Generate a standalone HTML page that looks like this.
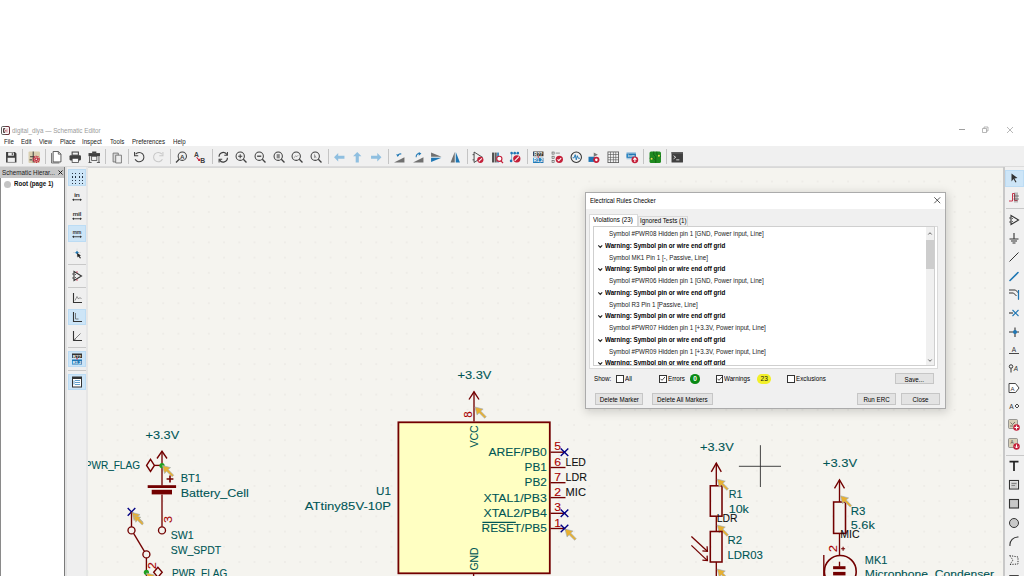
<!DOCTYPE html>
<html><head><meta charset="utf-8">
<style>
*{margin:0;padding:0;box-sizing:border-box}
html,body{width:1024px;height:576px;overflow:hidden;background:#fff;font-family:"Liberation Sans",sans-serif}
.a{position:absolute}
.t{position:absolute;white-space:nowrap;line-height:1}
.u{font-size:7px;line-height:normal;transform-origin:0 0}
.m{transform:scaleX(0.875)}
svg{position:absolute;overflow:visible}
#tb{left:0;top:146px;width:1024px;height:21px;background:#f0f0f0;border-bottom:1px solid #dcdcdc}
#lp{left:0;top:167px;width:65px;height:409px;background:#fff;border-left:1.2px solid #8a8a8a;border-right:1.2px solid #7a7a7a}
#lph{left:0;top:167px;width:64px;height:11px;background:#c8c8c8}
#ltb{left:65px;top:167px;width:23px;height:409px;background:#efefef;border-left:2px solid #e2e2e2;border-right:2px solid #e6e6e6}
#cv{left:88px;top:167px;width:915px;height:409px;background:#f5f4ef;border-top:1px solid #d8d8d8}
#rtb{left:1003px;top:167px;width:21px;height:409px;background:#f0f0f0;border-left:2px solid #c8c8c8}
.sep{position:absolute;top:149px;width:1px;height:15px;background:#c4c4c4}
.hl{position:absolute;background:#cde5f7;border:1px solid #bcdcf4}
.lsep{position:absolute;left:68px;width:18px;height:1px;background:#c8c8c8}
.rsep{position:absolute;left:1006px;width:18px;height:1px;background:#c8c8c8}
</style></head><body>
<!-- title bar -->
<svg style="left:1.1px;top:125.6px" width="9" height="9" viewBox="0 0 9 9"><rect x="0.5" y="0.5" width="8" height="8" rx="1.3" fill="#fff" stroke="#606060" stroke-width="1"/><path d="M4.5 0.5H7.2A1.3 1.3 0 0 1 8.5 1.8V7.2A1.3 1.3 0 0 1 7.2 8.5H4.5" fill="none" stroke="#70303a" stroke-width="1"/><path d="M2.2 2.2h2v1h-1v2.6h1v1h-2z" fill="#2a1010"/><rect x="4.6" y="2.4" width="2.6" height="4.4" fill="#e8c8cc"/><rect x="4.2" y="4.2" width="1.2" height="1.2" fill="#b04050"/></svg>
<div class="t u" style="left:12.2px;top:126.96px;color:#9a9a9a;transform:scaleX(0.897)">digital_diya — Schematic Editor</div>
<div class="a" style="left:959px;top:129.3px;width:6px;height:0.7px;background:#a0a0a0"></div>
<svg style="left:981px;top:126px" width="8" height="8" viewBox="0 0 8 8"><path d="M1.5 2.5h4v4h-4zM3 2.5V1h4v4H5.5" fill="none" stroke="#9a9a9a" stroke-width="0.7"/></svg>
<svg style="left:1006px;top:126px" width="8" height="8" viewBox="0 0 8 8"><path d="M1 1L7 7M7 1L1 7" stroke="#9a9a9a" stroke-width="0.7"/></svg>
<!-- menu -->
<div class="t u m" style="left:3.6px;top:137.66px;color:#222">File</div>
<div class="t u m" style="left:20.5px;top:137.66px;color:#222">Edit</div>
<div class="t u m" style="left:38.7px;top:137.66px;color:#222">View</div>
<div class="t u m" style="left:59.5px;top:137.66px;color:#222">Place</div>
<div class="t u m" style="left:82px;top:137.66px;color:#222">Inspect</div>
<div class="t u m" style="left:110px;top:137.66px;color:#222">Tools</div>
<div class="t u m" style="left:132px;top:137.66px;color:#222">Preferences</div>
<div class="t u m" style="left:172.5px;top:137.66px;color:#222">Help</div>
<!-- toolbar -->
<div class="a" id="tb"></div>
<svg style="left:4.55px;top:150.8px" width="12.5" height="12.5" viewBox="0 0 24 24"><path d="M2 2h17l3 3v17H2z" fill="#404040"/><rect x="6" y="3" width="11" height="6" fill="#f0f0f0"/><rect x="13" y="4" width="2" height="4" fill="#404040"/><rect x="5" y="13" width="14" height="8" fill="#f0f0f0"/></svg>
<svg style="left:27.75px;top:150.8px" width="12.5" height="12.5" viewBox="0 0 24 24"><rect x="1" y="1" width="22" height="22" rx="2" fill="#d9cfb0"/><path d="M10 1v10M4 11h8M10 11v11M3 17h5" stroke="#333" stroke-width="1.8" fill="none"/><circle cx="16" cy="16" r="5.5" fill="none" stroke="#c4203a" stroke-width="3" stroke-dasharray="2.2 1.2"/><circle cx="16" cy="16" r="3.5" fill="#c4203a"/><circle cx="16" cy="16" r="1.6" fill="#f0f0f0"/></svg>
<svg style="left:49.75px;top:150.8px" width="12.5" height="12.5" viewBox="0 0 24 24"><path d="M6 1h10l5 5v15H6z" fill="#fff" stroke="#404040" stroke-width="1.6"/><path d="M16 1v5h5" fill="none" stroke="#404040" stroke-width="1.4"/><path d="M3 4v19h15" fill="none" stroke="#404040" stroke-width="1.4"/></svg>
<svg style="left:68.95px;top:150.8px" width="12.5" height="12.5" viewBox="0 0 24 24"><rect x="6" y="2" width="12" height="6" fill="none" stroke="#404040" stroke-width="2"/><rect x="1" y="8" width="22" height="10" rx="2" fill="#404040"/><rect x="6" y="14" width="12" height="8" fill="#f8f8f8" stroke="#404040" stroke-width="1.5"/></svg>
<svg style="left:87.55px;top:150.8px" width="12.5" height="12.5" viewBox="0 0 24 24"><rect x="1" y="4" width="22" height="6" fill="#404040"/><path d="M3 10v12M21 10v12M1 22h6M17 22h6" stroke="#404040" stroke-width="1.6"/><rect x="7" y="10" width="10" height="8" fill="none" stroke="#404040" stroke-width="1.5"/><rect x="8" y="1" width="8" height="3" fill="#404040"/></svg>
<svg style="left:111.15px;top:150.8px" width="12.5" height="12.5" viewBox="0 0 24 24"><path d="M4 4h10v17H4z" fill="#d8d8d8" stroke="#6a6a6a" stroke-width="1.6"/><path d="M9 8h11v15H9z" fill="#eeeeee" stroke="#6a6a6a" stroke-width="1.6"/></svg>
<svg style="left:133.35px;top:150.8px" width="12.5" height="12.5" viewBox="0 0 24 24"><path d="M5 6a9 9 0 1 1 -1 10" fill="none" stroke="#404040" stroke-width="2"/><path d="M3 2v7h7" fill="none" stroke="#404040" stroke-width="2"/></svg>
<svg style="left:152.05px;top:150.8px" width="12.5" height="12.5" viewBox="0 0 24 24"><path d="M19 6a9 9 0 1 0 1 10" fill="none" stroke="#c8c8c8" stroke-width="2"/><path d="M21 2v7h-7" fill="none" stroke="#c8c8c8" stroke-width="2"/></svg>
<svg style="left:175.25px;top:150.8px" width="12.5" height="12.5" viewBox="0 0 24 24"><circle cx="14" cy="10" r="8" fill="none" stroke="#404040" stroke-width="2"/><path d="M8 16L2 22" stroke="#404040" stroke-width="2.5"/><text x="14" y="14.5" font-size="12" text-anchor="middle" font-family="Liberation Sans" font-weight="bold" fill="#404040">A</text></svg>
<svg style="left:194.25px;top:150.8px" width="12.5" height="12.5" viewBox="0 0 24 24"><text x="0" y="11" font-size="13" font-family="Liberation Sans" font-weight="bold" fill="#404040">A</text><text x="12" y="23" font-size="13" font-family="Liberation Sans" font-weight="bold" fill="#404040">B</text><path d="M5 12l5 6M8 18h3v-3" stroke="#c4203a" stroke-width="2" fill="none"/></svg>
<svg style="left:216.55px;top:150.8px" width="12.5" height="12.5" viewBox="0 0 24 24"><path d="M4 11a8 8 0 0 1 15-4M20 13a8 8 0 0 1-15 4" fill="none" stroke="#404040" stroke-width="2.2"/><path d="M20 2v6h-6M4 22v-6h6" fill="none" stroke="#404040" stroke-width="2"/></svg>
<svg style="left:235.15px;top:150.8px" width="12.5" height="12.5" viewBox="0 0 24 24"><circle cx="10" cy="10" r="8" fill="none" stroke="#404040" stroke-width="2"/><path d="M16 16L22 22" stroke="#404040" stroke-width="2.5"/><path d="M6 10h8M10 6v8" stroke="#404040" stroke-width="2"/></svg>
<svg style="left:253.65px;top:150.8px" width="12.5" height="12.5" viewBox="0 0 24 24"><circle cx="10" cy="10" r="8" fill="none" stroke="#404040" stroke-width="2"/><path d="M16 16L22 22" stroke="#404040" stroke-width="2.5"/><path d="M6 10h8" stroke="#404040" stroke-width="2.5"/></svg>
<svg style="left:272.65px;top:150.8px" width="12.5" height="12.5" viewBox="0 0 24 24"><circle cx="10" cy="10" r="8" fill="none" stroke="#404040" stroke-width="2"/><path d="M16 16L22 22" stroke="#404040" stroke-width="2.5"/><rect x="7" y="6" width="6" height="8" fill="#888"/></svg>
<svg style="left:291.35px;top:150.8px" width="12.5" height="12.5" viewBox="0 0 24 24"><circle cx="10" cy="10" r="8" fill="none" stroke="#404040" stroke-width="2"/><path d="M16 16L22 22" stroke="#404040" stroke-width="2.5"/><path d="M6 13l3-4 2 2 3-3" stroke="#777" stroke-width="1.3" fill="none"/></svg>
<svg style="left:310.05px;top:150.8px" width="12.5" height="12.5" viewBox="0 0 24 24"><circle cx="10" cy="10" r="8" fill="none" stroke="#404040" stroke-width="2"/><path d="M16 16L22 22" stroke="#404040" stroke-width="2.5"/><path d="M8 5v9l2-2 3 2z" fill="#888"/></svg>
<svg style="left:332.95px;top:150.8px" width="12.5" height="12.5" viewBox="0 0 24 24"><path d="M2 12l8-8v5h12v6H10v5z" fill="#8fbfe0"/></svg>
<svg style="left:351.35px;top:150.8px" width="12.5" height="12.5" viewBox="0 0 24 24"><path d="M12 2l8 8h-5v12H9V10H4z" fill="#8fbfe0"/></svg>
<svg style="left:370.05px;top:150.8px" width="12.5" height="12.5" viewBox="0 0 24 24"><path d="M22 12l-8-8v5H2v6h12v5z" fill="#8fbfe0"/></svg>
<svg style="left:392.65px;top:150.8px" width="12.5" height="12.5" viewBox="0 0 24 24"><path d="M2 22L22 12v10z" fill="#707070"/><path d="M9 10a5 5 0 0 1 7-4" fill="none" stroke="#1f77b4" stroke-width="2"/><path d="M6 6l3 5 3-4z" fill="#1f77b4"/></svg>
<svg style="left:412.35px;top:150.8px" width="12.5" height="12.5" viewBox="0 0 24 24"><path d="M2 22L22 12v10z" fill="#707070"/><path d="M8 12a6 6 0 0 1 6-7" fill="none" stroke="#1f77b4" stroke-width="2"/><path d="M13 2l5 3-5 4z" fill="#1f77b4"/></svg>
<svg style="left:430.15px;top:150.8px" width="12.5" height="12.5" viewBox="0 0 24 24"><path d="M2 3L22 11H2z" fill="#707070"/><path d="M2 13H22L2 21z" fill="#1f77b4"/></svg>
<svg style="left:449.15px;top:150.8px" width="12.5" height="12.5" viewBox="0 0 24 24"><path d="M11 2L3 22h8z" fill="#707070"/><path d="M13 2v20h8z" fill="#1f77b4"/></svg>
<svg style="left:471.95px;top:150.8px" width="12.5" height="12.5" viewBox="0 0 24 24"><path d="M4 2L20 12L4 22z" fill="none" stroke="#333" stroke-width="1.6"/><path d="M1 7h3M1 17h3" stroke="#333" stroke-width="1.5"/><circle cx="16" cy="17" r="6" fill="#c4203a"/><path d="M13 20l6-6" stroke="#fff" stroke-width="2"/></svg>
<svg style="left:490.85px;top:150.8px" width="12.5" height="12.5" viewBox="0 0 24 24"><rect x="2" y="3" width="4" height="19" fill="#505050"/><rect x="7" y="3" width="4" height="19" fill="#606060"/><rect x="12" y="3" width="3" height="19" fill="#1f77b4"/><circle cx="16" cy="15" r="5" fill="#fff" stroke="#c4203a" stroke-width="2.2"/><path d="M19 19l4 4" stroke="#c4203a" stroke-width="2.4"/></svg>
<svg style="left:509.35px;top:150.8px" width="12.5" height="12.5" viewBox="0 0 24 24"><path d="M5 5h14M5 5v14" stroke="#6aa0d0" stroke-width="1.5"/><circle cx="5" cy="4" r="2.5" fill="#1f77b4"/><circle cx="11" cy="4" r="2.5" fill="#1f77b4"/><circle cx="17" cy="4" r="2.5" fill="#1f77b4"/><circle cx="4" cy="19" r="2.5" fill="#1f77b4"/><circle cx="15" cy="15" r="7" fill="#c4203a"/><path d="M11 19l8-8" stroke="#fff" stroke-width="2"/></svg>
<svg style="left:532.45px;top:150.8px" width="12.5" height="12.5" viewBox="0 0 24 24"><rect x="2" y="1" width="20" height="9" fill="#333"/><text x="12" y="9" font-size="8.5" text-anchor="middle" font-family="Liberation Sans" font-weight="bold" fill="#fff">R??</text><rect x="2" y="13" width="20" height="10" fill="#1f77b4"/><text x="12" y="21.5" font-size="8.5" text-anchor="middle" font-family="Liberation Sans" font-weight="bold" fill="#fff">R1,2</text><circle cx="12" cy="11.5" r="1.5" fill="#c4203a"/></svg>
<svg style="left:551.45px;top:150.8px" width="12.5" height="12.5" viewBox="0 0 24 24"><rect x="2" y="2" width="4" height="4" fill="none" stroke="#555" stroke-width="1.2"/><rect x="2" y="10" width="4" height="4" fill="none" stroke="#555" stroke-width="1.2"/><rect x="2" y="18" width="4" height="4" fill="none" stroke="#555" stroke-width="1.2"/><path d="M9 4h8" stroke="#555" stroke-width="1.2"/><circle cx="16" cy="16" r="7" fill="#c4203a"/><path d="M12.5 16l2.5 2.5 4.5-5" stroke="#fff" stroke-width="2" fill="none"/></svg>
<svg style="left:569.65px;top:150.8px" width="12.5" height="12.5" viewBox="0 0 24 24"><circle cx="12" cy="12" r="10" fill="none" stroke="#333" stroke-width="2"/><path d="M5 13h3l2-6 2 10 2-8 2 5h3" stroke="#1f77b4" stroke-width="1.8" fill="none"/></svg>
<svg style="left:588.25px;top:150.8px" width="12.5" height="12.5" viewBox="0 0 24 24"><rect x="1" y="11" width="12" height="10" fill="#1f77b4"/><path d="M11 3l8 4-8 4z" fill="#777"/><circle cx="16" cy="17" r="6" fill="#c4203a"/><circle cx="16" cy="17" r="2.5" fill="#fff"/></svg>
<svg style="left:606.75px;top:150.8px" width="12.5" height="12.5" viewBox="0 0 24 24"><rect x="1" y="1" width="22" height="22" fill="#5a5a5a"/><rect x="2.6" y="2.6" width="3.8" height="3.8" fill="#f4f4f4"/><rect x="2.6" y="7.6" width="3.8" height="3.8" fill="#f4f4f4"/><rect x="2.6" y="12.6" width="3.8" height="3.8" fill="#f4f4f4"/><rect x="2.6" y="17.6" width="3.8" height="3.8" fill="#f4f4f4"/><rect x="7.6" y="2.6" width="3.8" height="3.8" fill="#f4f4f4"/><rect x="7.6" y="7.6" width="3.8" height="3.8" fill="#f4f4f4"/><rect x="7.6" y="12.6" width="3.8" height="3.8" fill="#f4f4f4"/><rect x="7.6" y="17.6" width="3.8" height="3.8" fill="#f4f4f4"/><rect x="12.6" y="2.6" width="3.8" height="3.8" fill="#f4f4f4"/><rect x="12.6" y="7.6" width="3.8" height="3.8" fill="#f4f4f4"/><rect x="12.6" y="12.6" width="3.8" height="3.8" fill="#f4f4f4"/><rect x="12.6" y="17.6" width="3.8" height="3.8" fill="#f4f4f4"/><rect x="17.6" y="2.6" width="3.8" height="3.8" fill="#f4f4f4"/><rect x="17.6" y="7.6" width="3.8" height="3.8" fill="#f4f4f4"/><rect x="17.6" y="12.6" width="3.8" height="3.8" fill="#f4f4f4"/><rect x="17.6" y="17.6" width="3.8" height="3.8" fill="#f4f4f4"/></svg>
<svg style="left:625.75px;top:150.8px" width="12.5" height="12.5" viewBox="0 0 24 24"><rect x="1" y="2" width="18" height="14" fill="#aac8e0"/><rect x="1" y="5" width="18" height="8" fill="#1f77b4"/><text x="10" y="11.5" font-size="7" text-anchor="middle" font-family="Liberation Sans" fill="#fff">bom</text><circle cx="17" cy="17" r="6.5" fill="#c4203a"/><path d="M17 21v-7M14 16.5l3-3 3 3" stroke="#fff" stroke-width="2" fill="none"/></svg>
<svg style="left:648.65px;top:150.8px" width="12.5" height="12.5" viewBox="0 0 24 24"><rect x="1" y="1" width="22" height="22" rx="3" fill="#1f8a1f"/><path d="M9 1v6l4 4v12M15 1v5l4 4h4M1 14h7l3 3" stroke="#0d4d0d" stroke-width="1.2" fill="none"/><circle cx="5" cy="15" r="2" fill="#e8e050"/><circle cx="19" cy="9" r="2" fill="#e8e050"/></svg>
<svg style="left:671.45px;top:150.8px" width="12.5" height="12.5" viewBox="0 0 24 24"><rect x="1" y="2" width="22" height="20" rx="1" fill="#404040"/><rect x="1" y="2" width="22" height="3" fill="#606060"/><path d="M5 9l4 3-4 3" stroke="#fff" stroke-width="1.5" fill="none"/><path d="M10 17h6" stroke="#fff" stroke-width="1.5"/></svg>
<div class="sep" style="left:22.1px"></div>
<div class="sep" style="left:44.9px"></div>
<div class="sep" style="left:105.1px"></div>
<div class="sep" style="left:128.3px"></div>
<div class="sep" style="left:169.9px"></div>
<div class="sep" style="left:211.5px"></div>
<div class="sep" style="left:328.2px"></div>
<div class="sep" style="left:388.3px"></div>
<div class="sep" style="left:467.0px"></div>
<div class="sep" style="left:526.7px"></div>
<div class="sep" style="left:643.3px"></div>
<div class="sep" style="left:666.1px"></div>
<!-- panels -->
<div class="a" id="lp"></div>
<div class="a" id="lph"></div>
<div class="t u" style="left:1.7px;top:169.4px;color:#1a1a1a;transform:scaleX(0.898)">Schematic Hierar...</div>
<svg style="left:57.5px;top:170px" width="5" height="5" viewBox="0 0 5 5"><path d="M0.5 0.5L4.5 4.5M4.5 0.5L0.5 4.5" stroke="#111" stroke-width="0.9"/></svg>
<div class="a" style="left:4px;top:181px;width:7px;height:7px;border-radius:50%;background:#c4c4c4"></div>
<div class="t u" style="left:14.3px;top:180.2px;font-weight:bold;color:#111;transform:scaleX(0.88)">Root (page 1)</div>
<div class="a" id="ltb"></div>
<div class="hl" style="left:68px;top:169.3px;width:18px;height:17.1px"></div>
<div class="hl" style="left:68px;top:225.3px;width:18px;height:16.7px"></div>
<div class="hl" style="left:68px;top:308.6px;width:18px;height:16.7px"></div>
<div class="hl" style="left:68px;top:351.2px;width:18px;height:16.0px"></div>
<div class="hl" style="left:68px;top:373.5px;width:18px;height:16.6px"></div>
<div class="a" style="left:71.60px;top:172.70px;width:1.4px;height:1.4px;background:#1a2636;border-radius:0.3px"></div>
<div class="a" style="left:71.60px;top:176.15px;width:1.4px;height:1.4px;background:#1a2636;border-radius:0.3px"></div>
<div class="a" style="left:71.60px;top:179.60px;width:1.4px;height:1.4px;background:#1a2636;border-radius:0.3px"></div>
<div class="a" style="left:71.60px;top:183.05px;width:1.4px;height:1.4px;background:#1a2636;border-radius:0.3px"></div>
<div class="a" style="left:75.05px;top:172.70px;width:1.4px;height:1.4px;background:#1a2636;border-radius:0.3px"></div>
<div class="a" style="left:75.05px;top:176.15px;width:1.4px;height:1.4px;background:#1a2636;border-radius:0.3px"></div>
<div class="a" style="left:75.05px;top:179.60px;width:1.4px;height:1.4px;background:#1a2636;border-radius:0.3px"></div>
<div class="a" style="left:75.05px;top:183.05px;width:1.4px;height:1.4px;background:#1a2636;border-radius:0.3px"></div>
<div class="a" style="left:78.50px;top:172.70px;width:1.4px;height:1.4px;background:#1a2636;border-radius:0.3px"></div>
<div class="a" style="left:78.50px;top:176.15px;width:1.4px;height:1.4px;background:#1a2636;border-radius:0.3px"></div>
<div class="a" style="left:78.50px;top:179.60px;width:1.4px;height:1.4px;background:#1a2636;border-radius:0.3px"></div>
<div class="a" style="left:78.50px;top:183.05px;width:1.4px;height:1.4px;background:#1a2636;border-radius:0.3px"></div>
<div class="a" style="left:81.95px;top:172.70px;width:1.4px;height:1.4px;background:#1a2636;border-radius:0.3px"></div>
<div class="a" style="left:81.95px;top:176.15px;width:1.4px;height:1.4px;background:#1a2636;border-radius:0.3px"></div>
<div class="a" style="left:81.95px;top:179.60px;width:1.4px;height:1.4px;background:#1a2636;border-radius:0.3px"></div>
<div class="a" style="left:81.95px;top:183.05px;width:1.4px;height:1.4px;background:#1a2636;border-radius:0.3px"></div>
<div class="lsep" style="top:264.0px"></div>
<div class="lsep" style="top:287.0px"></div>
<div class="lsep" style="top:347.0px"></div>
<div class="lsep" style="top:370.0px"></div>
<svg style="left:71.0px;top:171.8px" width="12" height="12" viewBox="0 0 24 24"></svg>
<svg style="left:71.0px;top:190.8px" width="12" height="12" viewBox="0 0 24 24"><text x="12" y="11.5" font-size="12" text-anchor="middle" font-family="Liberation Sans" fill="#333" stroke="#333" stroke-width="0.4" textLength="11" lengthAdjust="spacingAndGlyphs">in</text><path d="M4 17.5h16" stroke="#333" stroke-width="1.8"/><path d="M2 17.5l4-2.5v5zM22 17.5l-4-2.5v5z" fill="#333"/></svg>
<svg style="left:71.0px;top:209.5px" width="12" height="12" viewBox="0 0 24 24"><text x="12" y="11.5" font-size="12" text-anchor="middle" font-family="Liberation Sans" fill="#333" stroke="#333" stroke-width="0.4" textLength="17" lengthAdjust="spacingAndGlyphs">mil</text><path d="M4 17.5h16" stroke="#333" stroke-width="1.8"/><path d="M2 17.5l4-2.5v5zM22 17.5l-4-2.5v5z" fill="#333"/></svg>
<svg style="left:71.0px;top:228.2px" width="12" height="12" viewBox="0 0 24 24"><text x="12" y="11.5" font-size="12" text-anchor="middle" font-family="Liberation Sans" fill="#333" stroke="#333" stroke-width="0.4" textLength="17" lengthAdjust="spacingAndGlyphs">mm</text><path d="M4 17.5h16" stroke="#333" stroke-width="1.8"/><path d="M2 17.5l4-2.5v5zM22 17.5l-4-2.5v5z" fill="#333"/></svg>
<svg style="left:71.0px;top:246.7px" width="12" height="12" viewBox="0 0 24 24"><path d="M12 3v16M4 11h16" stroke="#c8c8c8" stroke-width="1"/><path d="M9 11h6M12 8v6" stroke="#1f77b4" stroke-width="2.5"/><path d="M12 12l8 5-3 1 3 4-2 1-3-4-2 2z" fill="#222"/></svg>
<svg style="left:71.0px;top:269.6px" width="12" height="12" viewBox="0 0 24 24"><path d="M6 3L21 12L6 21z" fill="none" stroke="#333" stroke-width="2.2"/><path d="M2 8h4M2 16h4" stroke="#333" stroke-width="1.5"/><circle cx="9" cy="9" r="1" fill="#333"/><circle cx="9" cy="15" r="1" fill="#333"/><circle cx="12" cy="4" r="1.3" fill="#c4203a"/><circle cx="12" cy="20" r="1.3" fill="#c4203a"/></svg>
<svg style="left:71.0px;top:292.2px" width="12" height="12" viewBox="0 0 24 24"><path d="M5 2v19h17" stroke="#333" stroke-width="2.2" fill="none"/><path d="M8 17l4-8 3 5 3-3 3 3" stroke="#555" stroke-width="1.2" fill="none"/></svg>
<svg style="left:71.0px;top:311.0px" width="12" height="12" viewBox="0 0 24 24"><path d="M5 2v19h17" stroke="#333" stroke-width="2.2" fill="none"/><path d="M9 4v12h6" stroke="#555" stroke-width="1.5" fill="none"/></svg>
<svg style="left:71.0px;top:329.6px" width="12" height="12" viewBox="0 0 24 24"><path d="M5 2v19h17" stroke="#333" stroke-width="2.2" fill="none"/><path d="M5 21L19 7" stroke="#555" stroke-width="1.5"/><path d="M9 21a4 4 0 0 0-1-4" stroke="#555" fill="none"/></svg>
<svg style="left:71.0px;top:353.2px" width="12" height="12" viewBox="0 0 24 24"><rect x="2" y="1" width="20" height="9" fill="#333"/><text x="12" y="9" font-size="8.5" text-anchor="middle" font-family="Liberation Sans" font-weight="bold" fill="#fff">R??</text><rect x="2" y="13" width="20" height="10" fill="#1f77b4"/><text x="12" y="21.5" font-size="8.5" text-anchor="middle" font-family="Liberation Sans" font-weight="bold" fill="#fff">R1,2</text><circle cx="12" cy="11.5" r="1.5" fill="#c4203a"/></svg>
<svg style="left:71.0px;top:375.8px" width="12" height="12" viewBox="0 0 24 24"><rect x="3" y="2" width="18" height="20" fill="#fff" stroke="#333" stroke-width="2"/><rect x="3" y="2" width="18" height="4" fill="#333"/><path d="M8 9h10M8 13h10M8 17h10M6 9v8" stroke="#1f77b4" stroke-width="1.4" fill="none"/></svg>
<div class="a" id="cv"></div>
<svg style="left:88px;top:168px;overflow:hidden" width="915" height="408" viewBox="88 168 915 408"><defs><pattern id="gp" x="102.3" y="181.5" width="15.22" height="15.22" patternUnits="userSpaceOnUse"><rect x="-0.5" y="-0.5" width="1" height="1" fill="#d8d7d1"/><rect x="14.72" y="14.72" width="1" height="1" fill="#d8d7d1"/><rect x="14.72" y="-0.5" width="1" height="1" fill="#d8d7d1"/><rect x="-0.5" y="14.72" width="1" height="1" fill="#d8d7d1"/></pattern></defs><rect x="88" y="168" width="915" height="408" fill="url(#gp)"/><g font-family="Liberation Sans" stroke-width="0"><text x="145.5" y="439.0" font-size="11.8" fill="#005656" stroke="#005656" stroke-width="0.1" text-anchor="start" textLength="33.7" lengthAdjust="spacingAndGlyphs">+3.3V</text>
<path d="M157 458.5 L162 451.3 L167 458.5" fill="none" stroke="#720000" stroke-width="1.35"/>
<line x1="162" y1="451.3" x2="162" y2="485.5" stroke="#720000" stroke-width="1.35"/>
<path d="M146.6 465.4 L150.5 459.4 L154.4 465.4 L150.5 471.4 Z" fill="none" stroke="#720000" stroke-width="1.4"/>
<line x1="154.4" y1="465.4" x2="162" y2="465.4" stroke="#720000" stroke-width="1.35"/>
<circle cx="162" cy="465.6" r="2.6" fill="#20a020"/>
<text x="140.0" y="468.7" font-size="11.8" fill="#005656" stroke="#005656" stroke-width="0.1" text-anchor="end" textLength="55.3" lengthAdjust="spacingAndGlyphs">PWR_FLAG</text>
<path transform="translate(162.5,465.5) scale(0.95)" d="M0 0 L8.5 2.2 L6 4.3 L11.8 10.2 L10.2 11.8 L4.3 6 L2.2 8.5 Z" fill="#e8b030" stroke="#a0acb8" stroke-width="0.7" stroke-linejoin="round"/>
<path d="M166.6 479H173.4M170 475.6V482.4" stroke="#720000" stroke-width="1.6"/>
<rect x="147.7" y="485.2" width="28.4" height="2.8" fill="#720000"/>
<rect x="151.7" y="489.8" width="20.3" height="4.6" fill="#720000"/>
<line x1="162" y1="494.4" x2="162" y2="526.8" stroke="#720000" stroke-width="1.35"/>
<circle cx="162" cy="530.4" r="3.5" fill="none" stroke="#720000" stroke-width="1.35"/>
<text transform="translate(172.1,523.0) rotate(-90)" x="0" y="0" font-size="11.8" fill="#a90000" stroke="#a90000" stroke-width="0.1" textLength="7.1" lengthAdjust="spacingAndGlyphs">3</text>
<text x="180.7" y="481.7" font-size="11.8" fill="#005656" stroke="#005656" stroke-width="0.1" text-anchor="start" textLength="20.2" lengthAdjust="spacingAndGlyphs">BT1</text>
<text x="180.7" y="497.0" font-size="11.8" fill="#005656" stroke="#005656" stroke-width="0.1" text-anchor="start" textLength="68.1" lengthAdjust="spacingAndGlyphs">Battery_Cell</text>
<text x="170.7" y="539.1" font-size="11.8" fill="#005656" stroke="#005656" stroke-width="0.1" text-anchor="start" textLength="22.9" lengthAdjust="spacingAndGlyphs">SW1</text>
<text x="170.7" y="554.0" font-size="11.8" fill="#005656" stroke="#005656" stroke-width="0.1" text-anchor="start" textLength="50.5" lengthAdjust="spacingAndGlyphs">SW_SPDT</text>
<text x="172.0" y="576.7" font-size="11.8" fill="#005656" stroke="#005656" stroke-width="0.1" text-anchor="start" textLength="55.3" lengthAdjust="spacingAndGlyphs">PWR_FLAG</text>
<path d="M127.7 508.09999999999997L135.3 515.6999999999999M135.3 508.09999999999997L127.7 515.6999999999999" stroke="#000084" stroke-width="1.4"/>
<line x1="131.5" y1="511.9" x2="131.5" y2="526.9" stroke="#720000" stroke-width="1.35"/>
<circle cx="131.5" cy="530.4" r="3.5" fill="none" stroke="#720000" stroke-width="1.35"/>
<path transform="translate(132,512.5) scale(0.95)" d="M0 0 L8.5 2.2 L6 4.3 L11.8 10.2 L10.2 11.8 L4.3 6 L2.2 8.5 Z" fill="#e8b030" stroke="#a0acb8" stroke-width="0.7" stroke-linejoin="round"/>
<path transform="translate(134,515.5) scale(0.8)" d="M0 0 L8.5 2.2 L6 4.3 L11.8 10.2 L10.2 11.8 L4.3 6 L2.2 8.5 Z" fill="#e8b030" stroke="#a0acb8" stroke-width="0.7" stroke-linejoin="round"/>
<line x1="133.6" y1="533.3" x2="144.4" y2="551.3" stroke="#720000" stroke-width="1.35"/>
<circle cx="146.4" cy="554.4" r="3.5" fill="none" stroke="#720000" stroke-width="1.35"/>
<line x1="146.4" y1="557.9" x2="146.4" y2="577" stroke="#720000" stroke-width="1.35"/>
<text transform="translate(155.6,569.2) rotate(-90)" x="0" y="0" font-size="11.8" fill="#a90000" stroke="#a90000" stroke-width="0.1" textLength="7.1" lengthAdjust="spacingAndGlyphs">2</text>
<path d="M153.7 572.3 L157.9 567.3 L162.2 572.3 L157.9 577.3 Z" fill="none" stroke="#720000" stroke-width="1.4"/>
<circle cx="146.4" cy="572.3" r="2.6" fill="#20a020"/>
<path transform="translate(146.5,573) scale(0.95)" d="M0 0 L8.5 2.2 L6 4.3 L11.8 10.2 L10.2 11.8 L4.3 6 L2.2 8.5 Z" fill="#e8b030" stroke="#a0acb8" stroke-width="0.7" stroke-linejoin="round"/>
<text x="457.4" y="379.0" font-size="11.8" fill="#005656" stroke="#005656" stroke-width="0.1" text-anchor="start" textLength="34.0" lengthAdjust="spacingAndGlyphs">+3.3V</text>
<path d="M469 399.5 L474 391.8 L479 399.5" fill="none" stroke="#720000" stroke-width="1.35"/>
<line x1="474" y1="391.8" x2="474" y2="421.5" stroke="#720000" stroke-width="1.35"/>
<text transform="translate(471.6,417.7) rotate(-90)" x="0" y="0" font-size="11.8" fill="#a90000" stroke="#a90000" stroke-width="0.1" textLength="6.4" lengthAdjust="spacingAndGlyphs">8</text>
<path transform="translate(475,407) scale(0.95)" d="M0 0 L8.5 2.2 L6 4.3 L11.8 10.2 L10.2 11.8 L4.3 6 L2.2 8.5 Z" fill="#e8b030" stroke="#a0acb8" stroke-width="0.7" stroke-linejoin="round"/>
<rect x="398.4" y="422.3" width="151.4" height="151" fill="#ffffc2" stroke="#720000" stroke-width="1.8"/>
<text transform="translate(477.7,447.6) rotate(-90)" x="0" y="0" font-size="11.8" fill="#005656" stroke="#005656" stroke-width="0.1" textLength="22.3" lengthAdjust="spacingAndGlyphs">VCC</text>
<text transform="translate(477.7,570.6) rotate(-90)" x="0" y="0" font-size="11.8" fill="#005656" stroke="#005656" stroke-width="0.1" textLength="23.2" lengthAdjust="spacingAndGlyphs">GND</text>
<line x1="473.6" y1="574" x2="473.6" y2="580" stroke="#720000" stroke-width="1.35"/>
<line x1="550.5" y1="452.2" x2="565.5" y2="452.2" stroke="#720000" stroke-width="1.35"/>
<text x="546.8" y="456.0" font-size="11.8" fill="#005656" stroke="#005656" stroke-width="0.1" text-anchor="end" textLength="58.3" lengthAdjust="spacingAndGlyphs">AREF/PB0</text>
<text x="554.2" y="450.2" font-size="11.8" fill="#a90000" stroke="#a90000" stroke-width="0.1" text-anchor="start" textLength="6.8" lengthAdjust="spacingAndGlyphs">5</text>
<path d="M560.7 448.4L568.3 456.0M568.3 448.4L560.7 456.0" stroke="#000084" stroke-width="1.4"/>
<line x1="550.5" y1="467.5" x2="565.5" y2="467.5" stroke="#720000" stroke-width="1.35"/>
<text x="546.8" y="471.3" font-size="11.8" fill="#005656" stroke="#005656" stroke-width="0.1" text-anchor="end" textLength="22.2" lengthAdjust="spacingAndGlyphs">PB1</text>
<text x="554.2" y="465.5" font-size="11.8" fill="#a90000" stroke="#a90000" stroke-width="0.1" text-anchor="start" textLength="6.8" lengthAdjust="spacingAndGlyphs">6</text>
<line x1="550.5" y1="482.7" x2="565.5" y2="482.7" stroke="#720000" stroke-width="1.35"/>
<text x="546.8" y="486.2" font-size="11.8" fill="#005656" stroke="#005656" stroke-width="0.1" text-anchor="end" textLength="22.2" lengthAdjust="spacingAndGlyphs">PB2</text>
<text x="554.2" y="480.7" font-size="11.8" fill="#a90000" stroke="#a90000" stroke-width="0.1" text-anchor="start" textLength="6.8" lengthAdjust="spacingAndGlyphs">7</text>
<line x1="550.5" y1="497.6" x2="565.5" y2="497.6" stroke="#720000" stroke-width="1.35"/>
<text x="546.8" y="501.8" font-size="11.8" fill="#005656" stroke="#005656" stroke-width="0.1" text-anchor="end" textLength="63.2" lengthAdjust="spacingAndGlyphs">XTAL1/PB3</text>
<text x="554.2" y="495.6" font-size="11.8" fill="#a90000" stroke="#a90000" stroke-width="0.1" text-anchor="start" textLength="6.8" lengthAdjust="spacingAndGlyphs">2</text>
<line x1="550.5" y1="513.3" x2="565.5" y2="513.3" stroke="#720000" stroke-width="1.35"/>
<text x="546.8" y="516.7" font-size="11.8" fill="#005656" stroke="#005656" stroke-width="0.1" text-anchor="end" textLength="63.2" lengthAdjust="spacingAndGlyphs">XTAL2/PB4</text>
<text x="554.2" y="511.3" font-size="11.8" fill="#a90000" stroke="#a90000" stroke-width="0.1" text-anchor="start" textLength="6.8" lengthAdjust="spacingAndGlyphs">3</text>
<path d="M560.7 509.49999999999994L568.3 517.0999999999999M568.3 509.49999999999994L560.7 517.0999999999999" stroke="#000084" stroke-width="1.4"/>
<line x1="550.5" y1="528.5" x2="565.5" y2="528.5" stroke="#720000" stroke-width="1.35"/>
<text x="546.8" y="532.0" font-size="11.8" fill="#005656" stroke="#005656" stroke-width="0.1" text-anchor="end" textLength="65.2" lengthAdjust="spacingAndGlyphs">RESET/PB5</text>
<text x="554.2" y="526.5" font-size="11.8" fill="#a90000" stroke="#a90000" stroke-width="0.1" text-anchor="start" textLength="6.8" lengthAdjust="spacingAndGlyphs">1</text>
<path d="M560.7 524.7L568.3 532.3M568.3 524.7L560.7 532.3" stroke="#000084" stroke-width="1.4"/>
<line x1="482.4" y1="522.4" x2="515.8" y2="522.4" stroke="#005656" stroke-width="1.1"/>
<text x="565.6" y="465.5" font-size="11.8" fill="#101010" stroke="#101010" stroke-width="0.1" text-anchor="start" textLength="20.3" lengthAdjust="spacingAndGlyphs">LED</text>
<text x="565.6" y="480.8" font-size="11.8" fill="#101010" stroke="#101010" stroke-width="0.1" text-anchor="start" textLength="21.3" lengthAdjust="spacingAndGlyphs">LDR</text>
<text x="565.6" y="495.7" font-size="11.8" fill="#101010" stroke="#101010" stroke-width="0.1" text-anchor="start" textLength="20.3" lengthAdjust="spacingAndGlyphs">MIC</text>
<path transform="translate(565,529) scale(0.95)" d="M0 0 L8.5 2.2 L6 4.3 L11.8 10.2 L10.2 11.8 L4.3 6 L2.2 8.5 Z" fill="#e8b030" stroke="#a0acb8" stroke-width="0.7" stroke-linejoin="round"/>
<text x="376.1" y="495.0" font-size="11.8" fill="#005656" stroke="#005656" stroke-width="0.1" text-anchor="start" textLength="14.9" lengthAdjust="spacingAndGlyphs">U1</text>
<text x="304.8" y="510.0" font-size="11.8" fill="#005656" stroke="#005656" stroke-width="0.1" text-anchor="start" textLength="86.2" lengthAdjust="spacingAndGlyphs">ATtiny85V-10P</text>
<text x="700.0" y="450.8" font-size="11.8" fill="#005656" stroke="#005656" stroke-width="0.1" text-anchor="start" textLength="33.7" lengthAdjust="spacingAndGlyphs">+3.3V</text>
<path d="M711.3 471.9 L716.3 463.2 L721.3 471.9" fill="none" stroke="#720000" stroke-width="1.35"/>
<line x1="716.3" y1="463.2" x2="716.3" y2="485.8" stroke="#720000" stroke-width="1.35"/>
<rect x="710.3" y="485.8" width="11.7" height="30.4" fill="none" stroke="#720000" stroke-width="1.55"/>
<path transform="translate(717.2,479.1) scale(0.95)" d="M0 0 L8.5 2.2 L6 4.3 L11.8 10.2 L10.2 11.8 L4.3 6 L2.2 8.5 Z" fill="#e8b030" stroke="#a0acb8" stroke-width="0.7" stroke-linejoin="round"/>
<text x="728.7" y="498.0" font-size="11.8" fill="#005656" stroke="#005656" stroke-width="0.1" text-anchor="start" textLength="13.7" lengthAdjust="spacingAndGlyphs">R1</text>
<text x="728.7" y="513.2" font-size="11.8" fill="#005656" stroke="#005656" stroke-width="0.1" text-anchor="start" textLength="20.2" lengthAdjust="spacingAndGlyphs">10k</text>
<line x1="716.3" y1="516.2" x2="716.3" y2="531.5" stroke="#720000" stroke-width="1.35"/>
<text x="716.7" y="521.8" font-size="11.8" fill="#101010" stroke="#101010" stroke-width="0.1" text-anchor="start" textLength="20.7" lengthAdjust="spacingAndGlyphs">LDR</text>
<path transform="translate(717.2,525) scale(0.95)" d="M0 0 L8.5 2.2 L6 4.3 L11.8 10.2 L10.2 11.8 L4.3 6 L2.2 8.5 Z" fill="#e8b030" stroke="#a0acb8" stroke-width="0.7" stroke-linejoin="round"/>
<rect x="710.3" y="531.5" width="11.7" height="30.5" fill="none" stroke="#720000" stroke-width="1.55"/>
<text x="727.4" y="544.2" font-size="11.8" fill="#005656" stroke="#005656" stroke-width="0.1" text-anchor="start" textLength="14.6" lengthAdjust="spacingAndGlyphs">R2</text>
<text x="727.4" y="558.9" font-size="11.8" fill="#005656" stroke="#005656" stroke-width="0.1" text-anchor="start" textLength="35.4" lengthAdjust="spacingAndGlyphs">LDR03</text>
<line x1="691.4" y1="536.5" x2="707.4" y2="551.3" stroke="#720000" stroke-width="1.3"/>
<path d="M702.4 550.8 L707.4 551.3 L707.1 546.3" fill="none" stroke="#720000" stroke-width="1.3"/>
<line x1="691.4" y1="545.4" x2="707.4" y2="560.6" stroke="#720000" stroke-width="1.3"/>
<path d="M702.4 560.1 L707.4 560.6 L707.1 555.6" fill="none" stroke="#720000" stroke-width="1.3"/>
<line x1="716.3" y1="562" x2="716.3" y2="580" stroke="#720000" stroke-width="1.35"/>
<path transform="translate(717.2,569) scale(0.95)" d="M0 0 L8.5 2.2 L6 4.3 L11.8 10.2 L10.2 11.8 L4.3 6 L2.2 8.5 Z" fill="#e8b030" stroke="#a0acb8" stroke-width="0.7" stroke-linejoin="round"/>
<line x1="760.4" y1="445.2" x2="760.4" y2="487" stroke="#303030" stroke-width="0.9"/>
<line x1="738.9" y1="466.3" x2="781" y2="466.3" stroke="#303030" stroke-width="0.9"/>
<text x="822.8" y="467.2" font-size="11.8" fill="#005656" stroke="#005656" stroke-width="0.1" text-anchor="start" textLength="34.3" lengthAdjust="spacingAndGlyphs">+3.3V</text>
<path d="M834.5 488.4 L839.5 479.9 L844.5 488.4" fill="none" stroke="#720000" stroke-width="1.35"/>
<line x1="839.5" y1="479.9" x2="839.5" y2="502" stroke="#720000" stroke-width="1.35"/>
<rect x="833.6" y="502" width="11.9" height="31.4" fill="none" stroke="#720000" stroke-width="1.55"/>
<path transform="translate(840.5,495.8) scale(0.95)" d="M0 0 L8.5 2.2 L6 4.3 L11.8 10.2 L10.2 11.8 L4.3 6 L2.2 8.5 Z" fill="#e8b030" stroke="#a0acb8" stroke-width="0.7" stroke-linejoin="round"/>
<text x="850.7" y="515.0" font-size="11.8" fill="#005656" stroke="#005656" stroke-width="0.1" text-anchor="start" textLength="14.7" lengthAdjust="spacingAndGlyphs">R3</text>
<text x="850.7" y="529.3" font-size="11.8" fill="#005656" stroke="#005656" stroke-width="0.1" text-anchor="start" textLength="24.1" lengthAdjust="spacingAndGlyphs">5.6k</text>
<line x1="839.5" y1="533.4" x2="839.5" y2="555.5" stroke="#720000" stroke-width="1.35"/>
<text x="840.3" y="538.3" font-size="11.8" fill="#101010" stroke="#101010" stroke-width="0.1" text-anchor="start" textLength="19.3" lengthAdjust="spacingAndGlyphs">MIC</text>
<text transform="translate(837.0,552.1) rotate(-90)" x="0" y="0" font-size="11.8" fill="#a90000" stroke="#a90000" stroke-width="0.1" textLength="6.9" lengthAdjust="spacingAndGlyphs">2</text>
<path d="M841.1 548.7H845.1M843.1 546.7V550.7" stroke="#720000" stroke-width="1.1"/>
<circle cx="840.3" cy="571.4" r="15.9" fill="none" stroke="#720000" stroke-width="1.6"/>
<line x1="823.8" y1="555.1" x2="823.8" y2="580" stroke="#720000" stroke-width="1.35"/>
<line x1="839.5" y1="561.7" x2="839.5" y2="566.6" stroke="#720000" stroke-width="1.35"/>
<rect x="833.1" y="566.2" width="12.4" height="3" fill="#720000"/>
<rect x="833.1" y="571.9" width="12.4" height="3.5" fill="#720000"/>
<text x="864.8" y="564.0" font-size="11.8" fill="#005656" stroke="#005656" stroke-width="0.1" text-anchor="start" textLength="22.5" lengthAdjust="spacingAndGlyphs">MK1</text>
<text x="864.8" y="577.6" font-size="11.8" fill="#005656" stroke="#005656" stroke-width="0.1" text-anchor="start" textLength="129.2" lengthAdjust="spacingAndGlyphs">Microphone_Condenser</text></g></svg>
<div class="a" id="rtb"></div>
<div class="hl" style="left:1005px;top:169.6px;width:19px;height:17.3px"></div>
<div class="rsep" style="top:208.4px"></div>
<div class="rsep" style="top:454.6px"></div>
<svg style="left:1008.0px;top:171.8px" width="12" height="12" viewBox="0 0 24 24"><path d="M7 3l12 9-6 1 4 7-2 1-4-7-4 5z" fill="#333"/></svg>
<svg style="left:1008.0px;top:190.6px" width="12" height="12" viewBox="0 0 24 24"><path d="M2 20h7V5h4v14h6" stroke="#c4203a" stroke-width="1.8" fill="none"/><path d="M14 3v20M18 3v20M11 10h11M11 16h11" stroke="#555" stroke-width="1.4"/></svg>
<svg style="left:1008.0px;top:213.5px" width="12" height="12" viewBox="0 0 24 24"><path d="M6 3L21 12L6 21z" fill="none" stroke="#333" stroke-width="2.2"/><path d="M2 8h4M2 16h4" stroke="#333" stroke-width="1.5"/><circle cx="9" cy="9" r="1" fill="#333"/><circle cx="9" cy="15" r="1" fill="#333"/></svg>
<svg style="left:1008.0px;top:232.3px" width="12" height="12" viewBox="0 0 24 24"><path d="M12 2v12M3 14h18M6 18h12M9 22h6" stroke="#333" stroke-width="2.2"/></svg>
<svg style="left:1008.0px;top:251.0px" width="12" height="12" viewBox="0 0 24 24"><path d="M3 21L21 3" stroke="#333" stroke-width="2"/></svg>
<svg style="left:1008.0px;top:269.8px" width="12" height="12" viewBox="0 0 24 24"><path d="M4 21L20 5" stroke="#1f77b4" stroke-width="3.2" stroke-linecap="round"/></svg>
<svg style="left:1008.0px;top:288.2px" width="12" height="12" viewBox="0 0 24 24"><path d="M2 4h13l6 6v13M2 10h9l6 6" stroke="#333" stroke-width="2" fill="none"/><path d="M21 4v19" stroke="#1f77b4" stroke-width="2.5"/></svg>
<svg style="left:1008.0px;top:307.0px" width="12" height="12" viewBox="0 0 24 24"><path d="M2 12h8" stroke="#333" stroke-width="2.2"/><path d="M9 6l12 12M21 6L9 18" stroke="#1f77b4" stroke-width="2.2"/></svg>
<svg style="left:1008.0px;top:325.6px" width="12" height="12" viewBox="0 0 24 24"><path d="M2 12h20M14 3v19" stroke="#333" stroke-width="2.2"/><circle cx="14" cy="12" r="4" fill="#1f77b4"/></svg>
<svg style="left:1008.0px;top:344.3px" width="12" height="12" viewBox="0 0 24 24"><text x="12" y="15" font-size="13" text-anchor="middle" font-family="Liberation Sans" fill="#333">A</text><path d="M2 19h20" stroke="#333" stroke-width="1.8"/></svg>
<svg style="left:1008.0px;top:362.4px" width="12" height="12" viewBox="0 0 24 24"><circle cx="6" cy="9" r="3.5" fill="none" stroke="#333" stroke-width="2"/><path d="M6 13v8" stroke="#333" stroke-width="2"/><text x="16" y="17" font-size="13" text-anchor="middle" font-style="italic" font-family="Liberation Sans" fill="#333">A</text></svg>
<svg style="left:1008.0px;top:381.7px" width="12" height="12" viewBox="0 0 24 24"><path d="M2 3h13l7 9-7 9H2z" fill="#fff" stroke="#333" stroke-width="1.8"/><text x="9" y="17" font-size="12" text-anchor="middle" font-family="Liberation Sans" fill="#333">A</text></svg>
<svg style="left:1008.0px;top:400.4px" width="12" height="12" viewBox="0 0 24 24"><text x="7" y="17" font-size="13" text-anchor="middle" font-family="Liberation Sans" fill="#333">A</text><path d="M14 12l4-4 4 4-4 4z" fill="none" stroke="#333" stroke-width="1.8"/></svg>
<svg style="left:1008.0px;top:418.5px" width="12" height="12" viewBox="0 0 24 24"><rect x="1" y="1" width="18" height="18" rx="2" fill="#d8d0b8" stroke="#777" stroke-width="1.4"/><path d="M5 7l4 4 5-5M4 14h6" stroke="#444" stroke-width="1.3" fill="none"/><circle cx="17" cy="17" r="6.5" fill="#c4203a"/><path d="M17 13v8M13 17h8" stroke="#fff" stroke-width="2.2"/></svg>
<svg style="left:1008.0px;top:437.6px" width="12" height="12" viewBox="0 0 24 24"><rect x="1" y="1" width="18" height="18" rx="2" fill="#d8d0b8" stroke="#777" stroke-width="1.4"/><text x="8" y="11" font-size="9" text-anchor="middle" font-family="Liberation Sans" fill="#444">A</text><circle cx="17" cy="17" r="6.5" fill="#c4203a"/><path d="M17 13v7M14 17l3 3 3-3" stroke="#fff" stroke-width="2" fill="none"/></svg>
<svg style="left:1008.0px;top:460.4px" width="12" height="12" viewBox="0 0 24 24"><path d="M3 3h18M12 3v19" stroke="#222" stroke-width="3.5"/></svg>
<svg style="left:1008.0px;top:479.1px" width="12" height="12" viewBox="0 0 24 24"><rect x="3" y="3" width="18" height="17" fill="#fff" stroke="#333" stroke-width="2.2"/><rect x="5" y="5" width="14" height="13" fill="#ccc"/><path d="M7 9h10M7 13h7" stroke="#666" stroke-width="1.4"/></svg>
<svg style="left:1008.0px;top:497.9px" width="12" height="12" viewBox="0 0 24 24"><rect x="3" y="3" width="18" height="17" fill="#c8c8c8" stroke="#333" stroke-width="2.2"/></svg>
<svg style="left:1008.0px;top:516.8px" width="12" height="12" viewBox="0 0 24 24"><circle cx="12" cy="12" r="9" fill="#c8c8c8" stroke="#333" stroke-width="2"/></svg>
<svg style="left:1008.0px;top:535.2px" width="12" height="12" viewBox="0 0 24 24"><path d="M4 22A16 16 0 0 1 21 4" stroke="#333" stroke-width="2.2" fill="none"/></svg>
<svg style="left:1008.0px;top:553.6px" width="12" height="12" viewBox="0 0 24 24"><path d="M3 3l17 3v14L4 21l6-9z" stroke="#333" stroke-width="2" stroke-dasharray="2.5 2.5" fill="none"/></svg>
<svg style="left:1008.0px;top:574.0px" width="12" height="12" viewBox="0 0 24 24"><rect x="2" y="2" width="20" height="20" rx="2" fill="#444"/><circle cx="14" cy="8" r="3" fill="#fff"/></svg>
<div class="a" style="left:585px;top:192px;width:360.5px;height:216.5px;background:#f0f0f0;border:1px solid #ababab;box-shadow:1px 2px 9px 1px rgba(0,0,0,0.16)"></div>
<div class="a" style="left:586px;top:193px;width:358.5px;height:15.6px;background:#fff"></div>
<div class="t" style="left:590.40px;top:197.26px;font-size:7px;font-weight:normal;color:#000;line-height:normal;transform:scaleX(0.862);transform-origin:0 0;">Electrical Rules Checker</div>
<svg style="left:934px;top:197px" width="6.5" height="6.5" viewBox="0 0 6.5 6.5"><path d="M0.3 0.3L6.2 6.2M6.2 0.3L0.3 6.2" stroke="#222" stroke-width="0.75"/></svg>
<div class="a" style="left:589.4px;top:226.3px;width:348.8px;height:142.6px;background:#fff;border:1px solid #dadada"></div>
<div class="a" style="left:637.5px;top:216px;width:50px;height:10.8px;background:#f0f0f0;border:1px solid #dadada;border-bottom:none"></div>
<div class="a" style="left:589.4px;top:214.2px;width:48.2px;height:12.8px;background:#fff;border:1px solid #dadada;border-bottom:none"></div>
<div class="t" style="left:592.80px;top:215.97px;font-size:7px;font-weight:normal;color:#000;line-height:normal;transform:scaleX(0.89);transform-origin:0 0;">Violations (23)</div>
<div class="t" style="left:639.60px;top:216.76px;font-size:7px;font-weight:normal;color:#000;line-height:normal;transform:scaleX(0.89);transform-origin:0 0;">Ignored Tests (1)</div>
<div class="a" style="left:593.1px;top:226.3px;width:341.6px;height:139.4px;background:#fff;border:1px solid #cfcfcf;overflow:hidden">
<div class="t" style="left:15.40px;top:2.96px;font-size:7px;font-weight:normal;color:#1a1a1a;line-height:normal;transform:scaleX(0.89);transform-origin:0 0;">Symbol #PWR08 Hidden pin 1 [GND, Power input, Line]</div>
<div class="t" style="left:10.50px;top:14.69px;font-size:7px;font-weight:bold;color:#000;line-height:normal;transform:scaleX(0.89);transform-origin:0 0;">Warning: Symbol pin or wire end off grid</div>
<svg style="left:3.9px;top:17.4px" width="4.5" height="3" viewBox="0 0 4.5 3"><path d="M0.3 0.4L2.25 2.4L4.2 0.4" fill="none" stroke="#222" stroke-width="1.1"/></svg>
<div class="t" style="left:15.40px;top:26.42px;font-size:7px;font-weight:normal;color:#1a1a1a;line-height:normal;transform:scaleX(0.89);transform-origin:0 0;">Symbol MK1 Pin 1 [-, Passive, Line]</div>
<div class="t" style="left:10.50px;top:38.15px;font-size:7px;font-weight:bold;color:#000;line-height:normal;transform:scaleX(0.89);transform-origin:0 0;">Warning: Symbol pin or wire end off grid</div>
<svg style="left:3.9px;top:40.9px" width="4.5" height="3" viewBox="0 0 4.5 3"><path d="M0.3 0.4L2.25 2.4L4.2 0.4" fill="none" stroke="#222" stroke-width="1.1"/></svg>
<div class="t" style="left:15.40px;top:49.88px;font-size:7px;font-weight:normal;color:#1a1a1a;line-height:normal;transform:scaleX(0.89);transform-origin:0 0;">Symbol #PWR06 Hidden pin 1 [GND, Power input, Line]</div>
<div class="t" style="left:10.50px;top:61.61px;font-size:7px;font-weight:bold;color:#000;line-height:normal;transform:scaleX(0.89);transform-origin:0 0;">Warning: Symbol pin or wire end off grid</div>
<svg style="left:3.9px;top:64.3px" width="4.5" height="3" viewBox="0 0 4.5 3"><path d="M0.3 0.4L2.25 2.4L4.2 0.4" fill="none" stroke="#222" stroke-width="1.1"/></svg>
<div class="t" style="left:15.40px;top:73.35px;font-size:7px;font-weight:normal;color:#1a1a1a;line-height:normal;transform:scaleX(0.89);transform-origin:0 0;">Symbol R3 Pin 1 [Passive, Line]</div>
<div class="t" style="left:10.50px;top:85.07px;font-size:7px;font-weight:bold;color:#000;line-height:normal;transform:scaleX(0.89);transform-origin:0 0;">Warning: Symbol pin or wire end off grid</div>
<svg style="left:3.9px;top:87.8px" width="4.5" height="3" viewBox="0 0 4.5 3"><path d="M0.3 0.4L2.25 2.4L4.2 0.4" fill="none" stroke="#222" stroke-width="1.1"/></svg>
<div class="t" style="left:15.40px;top:96.80px;font-size:7px;font-weight:normal;color:#1a1a1a;line-height:normal;transform:scaleX(0.89);transform-origin:0 0;">Symbol #PWR07 Hidden pin 1 [+3.3V, Power input, Line]</div>
<div class="t" style="left:10.50px;top:108.54px;font-size:7px;font-weight:bold;color:#000;line-height:normal;transform:scaleX(0.89);transform-origin:0 0;">Warning: Symbol pin or wire end off grid</div>
<svg style="left:3.9px;top:111.3px" width="4.5" height="3" viewBox="0 0 4.5 3"><path d="M0.3 0.4L2.25 2.4L4.2 0.4" fill="none" stroke="#222" stroke-width="1.1"/></svg>
<div class="t" style="left:15.40px;top:120.26px;font-size:7px;font-weight:normal;color:#1a1a1a;line-height:normal;transform:scaleX(0.89);transform-origin:0 0;">Symbol #PWR09 Hidden pin 1 [+3.3V, Power input, Line]</div>
<div class="t" style="left:10.50px;top:131.99px;font-size:7px;font-weight:bold;color:#000;line-height:normal;transform:scaleX(0.89);transform-origin:0 0;">Warning: Symbol pin or wire end off grid</div>
<svg style="left:3.9px;top:134.7px" width="4.5" height="3" viewBox="0 0 4.5 3"><path d="M0.3 0.4L2.25 2.4L4.2 0.4" fill="none" stroke="#222" stroke-width="1.1"/></svg>
<div class="a" style="left:331.6px;top:0;width:9px;height:139px;background:#f0f0f0"></div>
<div class="a" style="left:332.3px;top:12.6px;width:7.8px;height:28.9px;background:#cdcdcd"></div>
<svg style="left:334.1px;top:4.3px" width="4" height="3" viewBox="0 0 4 3"><path d="M0.3 2.5L2 0.7L3.7 2.5" fill="none" stroke="#444" stroke-width="0.8"/></svg>
<svg style="left:334.1px;top:131.7px" width="4" height="3" viewBox="0 0 4 3"><path d="M0.3 0.5L2 2.3L3.7 0.5" fill="none" stroke="#444" stroke-width="0.8"/></svg>
</div>
<div class="t" style="left:593.60px;top:374.67px;font-size:7px;font-weight:normal;color:#000;line-height:normal;transform:scaleX(0.89);transform-origin:0 0;">Show:</div>
<div class="a" style="left:616.3px;top:375.4px;width:7.5px;height:7.4px;background:#fff;border:0.8px solid #333"></div>
<div class="t" style="left:624.90px;top:374.67px;font-size:7px;font-weight:normal;color:#000;line-height:normal;transform:scaleX(0.89);transform-origin:0 0;">All</div>
<div class="a" style="left:659.4px;top:375.4px;width:7.5px;height:7.4px;background:#fff;border:0.8px solid #333"></div><svg style="left:659.4px;top:375.4px" width="7.5" height="7.4" viewBox="0 0 7.5 7.4"><path d="M1.5 3.8L3 5.3L6 2" fill="none" stroke="#222" stroke-width="0.8"/></svg>
<div class="t" style="left:668.10px;top:374.67px;font-size:7px;font-weight:normal;color:#000;line-height:normal;transform:scaleX(0.89);transform-origin:0 0;">Errors</div>
<div class="a" style="left:690px;top:374.4px;width:10.4px;height:9.4px;border-radius:50%;background:#0a8a14"></div>
<div class="t" style="left:690px;top:375.6px;width:10.4px;text-align:center;font-size:6.6px;color:#fff;font-weight:bold">0</div>
<div class="a" style="left:715.8px;top:375.4px;width:7.5px;height:7.4px;background:#fff;border:0.8px solid #333"></div><svg style="left:715.8px;top:375.4px" width="7.5" height="7.4" viewBox="0 0 7.5 7.4"><path d="M1.5 3.8L3 5.3L6 2" fill="none" stroke="#222" stroke-width="0.8"/></svg>
<div class="t" style="left:724.40px;top:374.67px;font-size:7px;font-weight:normal;color:#000;line-height:normal;transform:scaleX(0.89);transform-origin:0 0;">Warnings</div>
<div class="a" style="left:757px;top:374.4px;width:14.3px;height:9.4px;border-radius:4.7px;background:#f2f02a"></div>
<div class="t" style="left:757px;top:375.6px;width:14.3px;text-align:center;font-size:6.6px;color:#111">23</div>
<div class="a" style="left:787.0px;top:375.4px;width:7.5px;height:7.4px;background:#fff;border:0.8px solid #333"></div>
<div class="t" style="left:795.60px;top:374.67px;font-size:7px;font-weight:normal;color:#000;line-height:normal;transform:scaleX(0.89);transform-origin:0 0;">Exclusions</div>
<div class="a" style="left:895px;top:373.3px;width:38.5px;height:11.2px;background:#e3e3e3;border:1px solid #c6c6c6"></div><div class="t" style="left:895px;top:375.6px;width:38.5px;text-align:center;font-size:7px;color:#000;line-height:normal;transform:scaleX(0.89)">Save...</div>
<div class="a" style="left:594.7px;top:393.1px;width:48.8px;height:11.9px;background:#e3e3e3;border:1px solid #c6c6c6"></div><div class="t" style="left:594.7px;top:395.7px;width:48.8px;text-align:center;font-size:7px;color:#000;line-height:normal;transform:scaleX(0.89)">Delete Marker</div>
<div class="a" style="left:651.9px;top:393.1px;width:60.8px;height:11.9px;background:#e3e3e3;border:1px solid #c6c6c6"></div><div class="t" style="left:651.9px;top:395.7px;width:60.8px;text-align:center;font-size:7px;color:#000;line-height:normal;transform:scaleX(0.89)">Delete All Markers</div>
<div class="a" style="left:856.5px;top:393.3px;width:39.1px;height:11.5px;background:#e3e3e3;border:1px solid #c6c6c6"></div><div class="t" style="left:856.5px;top:395.7px;width:39.1px;text-align:center;font-size:7px;color:#000;line-height:normal;transform:scaleX(0.89)">Run ERC</div>
<div class="a" style="left:900.8px;top:393.3px;width:39.0px;height:11.5px;background:#e3e3e3;border:1px solid #c6c6c6"></div><div class="t" style="left:900.8px;top:395.7px;width:39.0px;text-align:center;font-size:7px;color:#000;line-height:normal;transform:scaleX(0.89)">Close</div>
</body></html>
